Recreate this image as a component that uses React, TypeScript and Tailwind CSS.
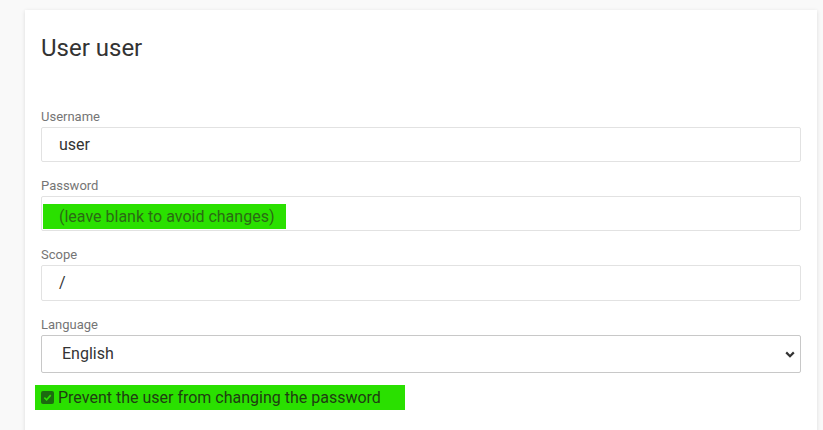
import React from "react";

const font = { fontFamily: "Roboto, 'Liberation Sans', sans-serif" };

function Field({ label, children }: { label: string; children: React.ReactNode }) {
  return (
    <div className="flex flex-col">
      <label className="text-[13px] leading-[16px] text-[#757575] mb-[2px]">{label}</label>
      {children}
    </div>
  );
}

export default function App() {
  return (
    <div style={font} className="w-[823px] h-[430px] bg-[#f9f9f9] overflow-hidden pt-[10px] pl-[25px] pr-[6px]">
      <div className="bg-white h-[440px] shadow-[0_1px_4px_rgba(0,0,0,0.12)] px-4 pt-[21px]">
        <h2 className="text-[24px] leading-[34px] text-[#333] font-normal mb-[44px]">User user</h2>

        <div className="flex flex-col gap-[16px]">
          <Field label="Username">
            <div className="h-[35px] border border-[#e2e2e2] rounded-[2px] flex items-center pl-[17px] text-[16px] text-[#333]">
              user
            </div>
          </Field>

          <Field label="Password">
            <div className="h-[35px] border border-[#e2e2e2] rounded-[2px] flex items-center">
              <span className="bg-[#2ae000] ml-px mt-[6px] h-[25px] w-[243px] flex items-center pl-[16px] text-[16px] text-[#2a6b14]">
                (leave blank to avoid changes)
              </span>
            </div>
          </Field>

          <Field label="Scope">
            <div className="h-[36px] border border-[#e2e2e2] rounded-[2px] flex items-center pl-[17px] text-[16px] text-[#333]">
              /
            </div>
          </Field>

          <Field label="Language">
            <div className="h-[38px] border border-[#c8c8c8] rounded-[2px] flex items-center justify-between pl-[20px] pr-[5px] text-[16px] text-[#333]">
              <span>English</span>
              <svg width="10" height="7" viewBox="0 0 10 7" className="text-[#333]">
                <path d="M1.2 1.4 L5 5.2 L8.8 1.4" fill="none" stroke="currentColor" strokeWidth="2.2" />
              </svg>
            </div>
          </Field>
        </div>

        <div className="mt-[12px] -ml-[6px] bg-[#2ae000] w-[370px] h-[25px] flex items-center pl-[6px] gap-[4px]">
          <span className="w-[13px] h-[13px] rounded-[2px] bg-[#1c6b10] flex items-center justify-center">
            <svg width="9" height="9" viewBox="0 0 10 10">
              <path d="M1.5 5.2 L4 7.6 L8.6 2.4" fill="none" stroke="#2ae000" strokeWidth="1.8" />
            </svg>
          </span>
          <span className="text-[16px] text-[#1f3d12]">Prevent the user from changing the password</span>
        </div>
      </div>
    </div>
  );
}
